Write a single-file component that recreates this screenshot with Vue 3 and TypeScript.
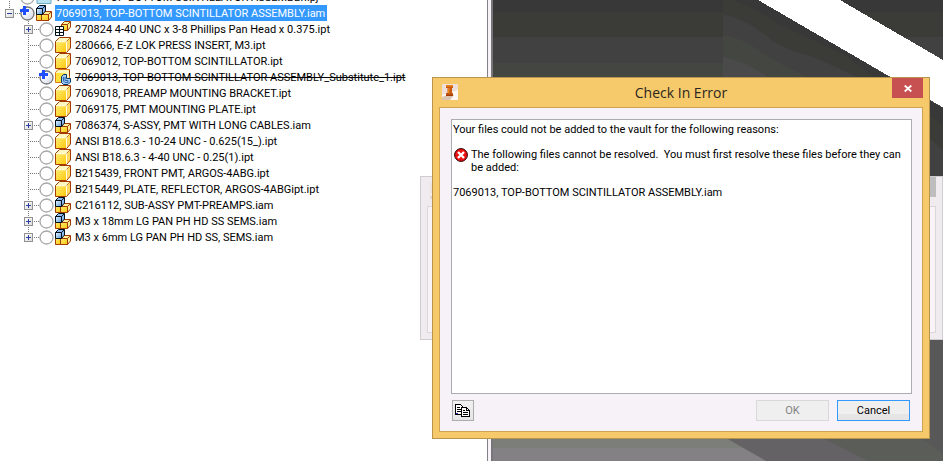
<script setup lang="ts">
import { ref } from 'vue'

type Kind = 'part' | 'assembly' | 'pattern' | 'substitute'

interface FileNode {
  name: string
  kind: Kind
  expandable?: boolean
  added?: boolean
  struck?: boolean
}

const root: FileNode = {
  name: '7069013, TOP-BOTTOM SCINTILLATOR ASSEMBLY.iam',
  kind: 'assembly',
  added: true,
}

const files: FileNode[] = [
  { name: '270824 4-40 UNC x 3-8 Phillips Pan Head x 0.375.ipt', kind: 'pattern', expandable: true },
  { name: '280666, E-Z LOK PRESS INSERT, M3.ipt', kind: 'part' },
  { name: '7069012, TOP-BOTTOM SCINTILLATOR.ipt', kind: 'part' },
  { name: '7069013, TOP-BOTTOM SCINTILLATOR ASSEMBLY_Substitute_1.ipt', kind: 'substitute', added: true, struck: true },
  { name: '7069018, PREAMP MOUNTING BRACKET.ipt', kind: 'part' },
  { name: '7069175, PMT MOUNTING PLATE.ipt', kind: 'part' },
  { name: '7086374, S-ASSY, PMT WITH LONG CABLES.iam', kind: 'assembly', expandable: true },
  { name: 'ANSI B18.6.3 - 10-24 UNC - 0.625(15_).ipt', kind: 'part' },
  { name: 'ANSI B18.6.3 - 4-40 UNC - 0.25(1).ipt', kind: 'part' },
  { name: 'B215439, FRONT PMT, ARGOS-4ABG.ipt', kind: 'part' },
  { name: 'B215449, PLATE, REFLECTOR, ARGOS-4ABGipt.ipt', kind: 'part' },
  { name: 'C216112, SUB-ASSY PMT-PREAMPS.iam', kind: 'assembly', expandable: true },
  { name: 'M3 x 18mm LG PAN PH HD SS SEMS.iam', kind: 'assembly', expandable: true },
  { name: 'M3 x 6mm LG PAN PH HD SS, SEMS.iam', kind: 'assembly', expandable: true },
]

const open = ref(true)
</script>

<template>
  <div class="app">
    <svg class="defs" width="0" height="0" aria-hidden="true">
      <defs>
        <linearGradient id="gold" x1="0" y1="0" x2="1" y2="1">
          <stop offset="0" stop-color="#ffec70" />
          <stop offset="1" stop-color="#ffc90e" />
        </linearGradient>
        <linearGradient id="blue" x1="0" y1="0" x2="1" y2="1">
          <stop offset="0" stop-color="#e8f3fd" />
          <stop offset="1" stop-color="#5f9fe0" />
        </linearGradient>
        <linearGradient id="disc" x1="0" y1="0" x2="1" y2="1">
          <stop offset="0.3" stop-color="#ffffff" />
          <stop offset="1" stop-color="#ccd3e4" />
        </linearGradient>
        <symbol id="part" viewBox="0 0 16 16">
          <path d="M.5 4.500 4.500.5H15.500V11L11.500 15.500H.5Z" fill="#fff6c0" />
          <path d="M1 5H11V15H1Z" fill="url(#gold)" />
          <path d="M12 5 15 2V11L12 14.500Z" fill="#ffd95c" />
          <path d="M1 4.700H11.500V15" fill="none" stroke="#fffbe6" />
          <path d="M.5 15.500V4.500L4.500.5H15.500V11L11.500 15.500H.5" fill="none" stroke="#a33b00" />
          <path d="M11.500 4.500 15 1" stroke="#c8741a" />
        </symbol>
        <symbol id="assembly" viewBox="0 0 16 16">
          <path d="M.5 9.500H5.500V15.500H.5Z" fill="url(#gold)" stroke="#a33b00" />
          <path d="M5.500 9.500 8 6.500H15.500V12L12.500 15.500H5.500Z" fill="#ffef9a" stroke="#a33b00" />
          <path d="M5.500 9.500H12.500V15.500H5.500Z" fill="url(#gold)" stroke="#a33b00" />
          <path d="M12.500 9.500 15.300 6.800" stroke="#a33b00" />
          <path d="M.5 3.500 3.500.5H9.500V6L6.500 9.500H.5Z" fill="#8abaf0" stroke="#00101c" />
          <path d="M1 4H6V9H1Z" fill="url(#blue)" />
          <path d="M.5 3.500H6.500V9.500M6.500 3.500 9.300.8" fill="none" stroke="#00101c" />
        </symbol>
        <symbol id="pattern" viewBox="0 0 16 16">
          <path d="M6.500 3.500 9.500.5H15.500V6L12.500 9.500H6.500Z" fill="#fff09a" stroke="#a33b00" />
          <path d="M6.500 3.500H12.500V9.500H6.500Z" fill="url(#gold)" stroke="#a33b00" />
          <path d="M12.500 3.500 15.300.8" stroke="#a33b00" />
          <path d="M.5 5.500H8.500V14.500H.5Z" fill="#fff" stroke="#001018" />
          <path d="M4.500 5.500V14.500M.5 8.500H8.500M.5 11.500H8.500" stroke="#001018" />
        </symbol>
        <symbol id="substitute" viewBox="0 0 16 16">
          <path d="M.5 3.500 3 .5H14.500V11L12 13.500H.5Z" fill="#fff5bd" stroke="#dc7a18" />
          <path d="M1 4H11V13H1Z" fill="#ffe13c" />
          <path d="M14.500 1V7" stroke="#a33b00" />
          <path d="M6.500 7.500 8.500 5.500H11.500V9.500H15.500V13L13 15.500H8.500L6.500 13.500Z" fill="#9fc8f5" stroke="#0b3565" />
          <path d="M8.500 8V12L10 13.500H13V11.500H10V8" fill="none" stroke="#2f6cae" />
        </symbol>
        <symbol id="logo" viewBox="0 0 16 16">
          <path d="M0 0H16V16H0Z" fill="#eee0d8" />
          <path d="M0 11 16 6V16H0Z" fill="#fff8f2" />
          <path d="M0 13 5 11H12L8 16H0Z" fill="#dac4b2" />
          <path d="M4 1H11V4H10V9H11V12H4V9H5.500V4H4Z" fill="#c95a10" />
          <path d="M4 1H11V2.500H4ZM6 4H7.500V9H6Z" fill="#ec8422" />
          <path d="M4 10.500H11V12H4Z" fill="#a3400a" />
        </symbol>
      </defs>
    </svg>

    <nav class="browser" aria-label="Vault browser">
      <div class="row previous">
        <span class="gutter"></span>
        <svg class="status" viewBox="0 0 15 15"><circle cx="7.500" cy="7.500" r="6.500" /></svg>
        <svg class="icon" viewBox="0 0 16 16"><path d="M1 1H15V14.500H1Z" fill="#b9e3f0" stroke="#6eacbf" /></svg>
        <span class="label">7069008, TOP-BOTTOM SCINTILLATOR ASSEMBLY.ipj</span>
      </div>
      <div class="row">
        <span class="gutter root-gutter">
          <button class="toggle" :aria-expanded="open" aria-label="Toggle assembly" @click="open = !open">
            <svg viewBox="0 0 9 9"><path d="M2 4.500H7" /><path v-if="!open" d="M4.500 2V7" /></svg>
          </button>
        </span>
        <svg class="status added" viewBox="0 0 15 15">
          <circle cx="7.500" cy="7.500" r="6.500" />
          <path d="M3 0H6V3H9V6H6V9H3V6H0V3H3Z" />
        </svg>
        <svg class="icon"><use :href="'#' + root.kind" /></svg>
        <span class="label selected">{{ root.name }}</span>
      </div>
      <ul v-if="open" class="children">
        <li v-for="file in files" :key="file.name" class="row">
          <span class="gutter">
            <button v-if="file.expandable" class="toggle" aria-expanded="false" :aria-label="'Expand ' + file.name">
              <svg viewBox="0 0 9 9"><path d="M2 4.500H7M4.500 2V7" /></svg>
            </button>
          </span>
          <svg class="status" :class="{ added: file.added }" viewBox="0 0 15 15">
            <circle cx="7.500" cy="7.500" r="6.500" />
            <path v-if="file.added" d="M3 0H6V3H9V6H6V9H3V6H0V3H3Z" />
          </svg>
          <svg class="icon"><use :href="'#' + file.kind" /></svg>
          <span class="label" :class="{ struck: file.struck }">{{ file.name }}</span>
        </li>
      </ul>
    </nav>

    <div class="splitter"></div>

    <main class="viewport">
      <svg viewBox="0 0 450 461" preserveAspectRatio="xMinYMin slice" aria-hidden="true">
        <path d="M0 0H450V461H0Z" fill="#585858" />
        <path d="M0 0H450V12H0Z" fill="#383838" />
        <path d="M0 12H450V37H0Z" fill="#3b3c38" />
        <path d="M0 37H450V63H0Z" fill="#414141" />
        <path d="M0 63H230V120H0Z" fill="#444642" />
        <path d="M230 0H265L450 108V200H230Z" fill="#383838" />
        <path d="M230 0H241Q265 10 286 24L350 54 450 125V220H230Z" fill="#3b3c38" />
        <path d="M230 14Q256 20 280 41 294 50 318 56L365 77 450 150V230H230Z" fill="#414141" />
        <path d="M230 35Q250 38 265 50 278 60 315 77L450 190V240H230Z" fill="#444642" />
        <path d="M230 57Q250 60 275 77L450 210V340H230Z" fill="#4a4a4a" />
        <path d="M265 0H347L450 60V107.500Z" fill="#fff" shape-rendering="crispEdges" />
        <path d="M0 430H240L290 461H0Z" fill="#848184" />
        <path d="M0 430H220L252 448H0Z" fill="#7b7e79" />
        <path d="M219 430H321L376 461H273Z" fill="#656266" />
        <path d="M314 430H418L450 455V461H375Z" fill="#5b5e58" />
      </svg>
    </main>

    <div class="ghost" aria-hidden="true">
      <svg class="ghost-logo"><use href="#logo" /></svg>
      <span class="ghost-close"></span>
      <div class="ghost-body"></div>
    </div>

    <section class="dialog" role="dialog" aria-labelledby="dialog-title">
      <header class="titlebar">
        <svg class="logo"><use href="#logo" /></svg>
        <h1 id="dialog-title">Check In Error</h1>
        <button class="close" aria-label="Close">
          <svg viewBox="0 0 8 7"><path d="M.7.500 7.300 6.500M7.300.500.7 6.500" /></svg>
        </button>
      </header>
      <div class="client">
        <div class="report">
          <p>Your files could not be added to the vault for the following reasons:</p>
          <div class="problem">
            <svg viewBox="0 0 14 14" role="img" aria-label="Error">
              <circle cx="7" cy="7" r="6.400" fill="#f01010" stroke="#200" />
              <path d="M4 4 10 10M10 4 4 10" stroke="#fff" stroke-width="2.400" />
            </svg>
            <p>The following files cannot be resolved.&nbsp; You must first resolve these files before they can be added:</p>
          </div>
          <p>7069013, TOP-BOTTOM SCINTILLATOR ASSEMBLY.iam</p>
        </div>
        <footer class="actions">
          <button class="copy" aria-label="Copy report">
            <svg viewBox="0 0 16 14" shape-rendering="crispEdges">
              <path d="M.5.500H5.500L8.500 3.500V10.500H.5Z" fill="#fff" stroke="#000" />
              <path d="M2 3.500H5M2 5.500H6M2 7.500H6" stroke="#000" />
              <path d="M1 9.500H3" stroke="#22a" />
              <path d="M6.500 3.500H11.500L14.500 6.500V12.500H6.500Z" fill="#fff" stroke="#000" />
              <path d="M11.500 3.500V6.500H14.500M8 6.500H10M8 8.500H13M8 10.500H13" fill="none" stroke="#000" />
            </svg>
          </button>
          <button class="action" disabled>OK</button>
          <button class="action primary">Cancel</button>
        </footer>
      </div>
    </section>
  </div>
</template>

<style>
body {
  margin: 0;
  background: #fff;
}
</style>

<style scoped>
.app {
  position: relative;
  display: grid;
  grid-template-columns: 487px 6px 1fr;
  height: 100vh;
  overflow: hidden;
  color: #000;
  font: 11px/13px Roboto, "DejaVu Sans Condensed", sans-serif;
}

.defs {
  position: absolute;
}

button {
  box-sizing: border-box;
  margin: 0;
  padding: 0;
  font: inherit;
}

.browser {
  min-width: 0;
  overflow: hidden;
  background: #fff;
}

.row {
  display: flex;
  align-items: center;
  height: 16px;
  white-space: nowrap;
}

.previous {
  margin-top: -11px;
}

.gutter {
  flex: none;
  box-sizing: border-box;
  display: flex;
  align-items: center;
  width: 20px;
  height: 16px;
  padding-left: 5px;
  background:
    repeating-linear-gradient(#777 0 1px, transparent 1px 2px) 9px 0 / 1px 100% no-repeat,
    repeating-linear-gradient(90deg, #777 0 1px, transparent 1px 2px) 9px 8px / 11px 1px no-repeat;
}

.root-gutter,
.row:last-child .gutter {
  background-size: 1px 8px, 11px 1px;
}

.toggle {
  display: flex;
  width: 9px;
  height: 9px;
  border: 1px solid #919191;
  background: linear-gradient(135deg, #fff, #dcdcdc);
}

.toggle svg {
  flex: none;
  width: 9px;
  height: 9px;
  margin: -1px;
  stroke: #2b3f9c;
}

.status {
  flex: none;
  width: 15px;
  height: 15px;
  overflow: visible;
}

.status circle {
  fill: #fff;
  stroke: #a9a9a9;
  stroke-width: 1.3px;
}

.status.added circle {
  fill: url(#disc);
  stroke: #777;
}

.status path {
  fill: #1f4fff;
}

.icon {
  flex: none;
  width: 16px;
  height: 16px;
  margin-left: 1px;
}

.label {
  margin-left: 3px;
  padding: 2px 2px 1px 1px;
}

.selected {
  background: #3399ff;
  color: #fff;
}

.struck {
  text-decoration: line-through;
}

.children {
  margin: 0;
  padding: 0 0 0 19px;
  list-style: none;
}

.splitter {
  box-sizing: border-box;
  border-left: 1px solid #85818a;
  border-right: 2px solid #77757a;
  background: #f7f2f6;
}

.viewport {
  min-width: 0;
  overflow: hidden;
  background: #585858;
}

.viewport svg {
  display: block;
  width: 100%;
  height: 100%;
}

.ghost {
  position: absolute;
  box-sizing: border-box;
  top: 176px;
  left: 420px;
  width: 523px;
  height: 164px;
  display: grid;
  grid-template: 29px 1fr / 1fr auto;
  padding: 0 6px 6px;
  border: 1px solid #cfcdd0;
  background: #efebef;
}

.ghost-logo {
  width: 16px;
  height: 16px;
  margin: 6px 3px;
  opacity: 0.5;
}

.ghost-close {
  width: 31px;
  height: 20px;
  background: #bebdbe;
}

.ghost-body {
  grid-column: 1 / -1;
  border: 1px solid #dad7da;
  background: #f7f3f7;
}

.dialog {
  position: absolute;
  box-sizing: border-box;
  top: 77px;
  left: 432px;
  width: 498px;
  height: 362px;
  display: flex;
  flex-direction: column;
  padding: 0 6px 6px;
  border: 1px solid #b8944c;
  background: #f6ca6b;
}

.titlebar {
  flex: none;
  display: grid;
  grid-template-columns: 31px 1fr 31px;
  height: 29px;
}

.logo {
  width: 16px;
  height: 16px;
  margin: 6px 3px;
}

.titlebar h1 {
  margin: 0;
  color: #2b2620;
  font: 14px/29px "Open Sans", "Noto Sans", sans-serif;
  text-align: center;
}

.close {
  display: grid;
  place-items: center;
  height: 20px;
  border: 0;
  background: #c75050;
}

.close svg {
  width: 8px;
  height: 7px;
  fill: none;
  stroke: #fff;
  stroke-width: 1.8px;
}

.client {
  flex: 1;
  display: flex;
  flex-direction: column;
  gap: 6px;
  min-height: 0;
  padding: 11px 10px 10px 11px;
  border: 1px solid #cda552;
  background: #f7f2f7;
}

.report {
  flex: 1;
  display: flex;
  flex-direction: column;
  gap: 12px;
  padding: 3px 1px;
  border: 1px solid #abadb3;
  background: #fff;
}

.report p {
  margin: 0;
}

.problem {
  display: flex;
  gap: 3px;
  padding: 0 4px 0 1px;
}

.problem svg {
  flex: none;
  width: 14px;
  height: 14px;
}

.actions {
  display: flex;
  gap: 8px;
  padding: 0 2px 0 1px;
}

.copy {
  display: grid;
  place-items: center;
  width: 22px;
  height: 21px;
  margin-right: auto;
  border: 1px solid #acacac;
  background: linear-gradient(#f1f1f1, #e5e5e5);
}

.copy svg {
  width: 16px;
  height: 14px;
}

.action {
  width: 73px;
  height: 21px;
  border: 1px solid #d9d9d9;
  background: #efefef;
  color: #838383;
}

.primary {
  border-color: #3399ff;
  background: linear-gradient(#f0eff0 70%, #e5e5e5 70%);
  color: #000;
}
</style>
